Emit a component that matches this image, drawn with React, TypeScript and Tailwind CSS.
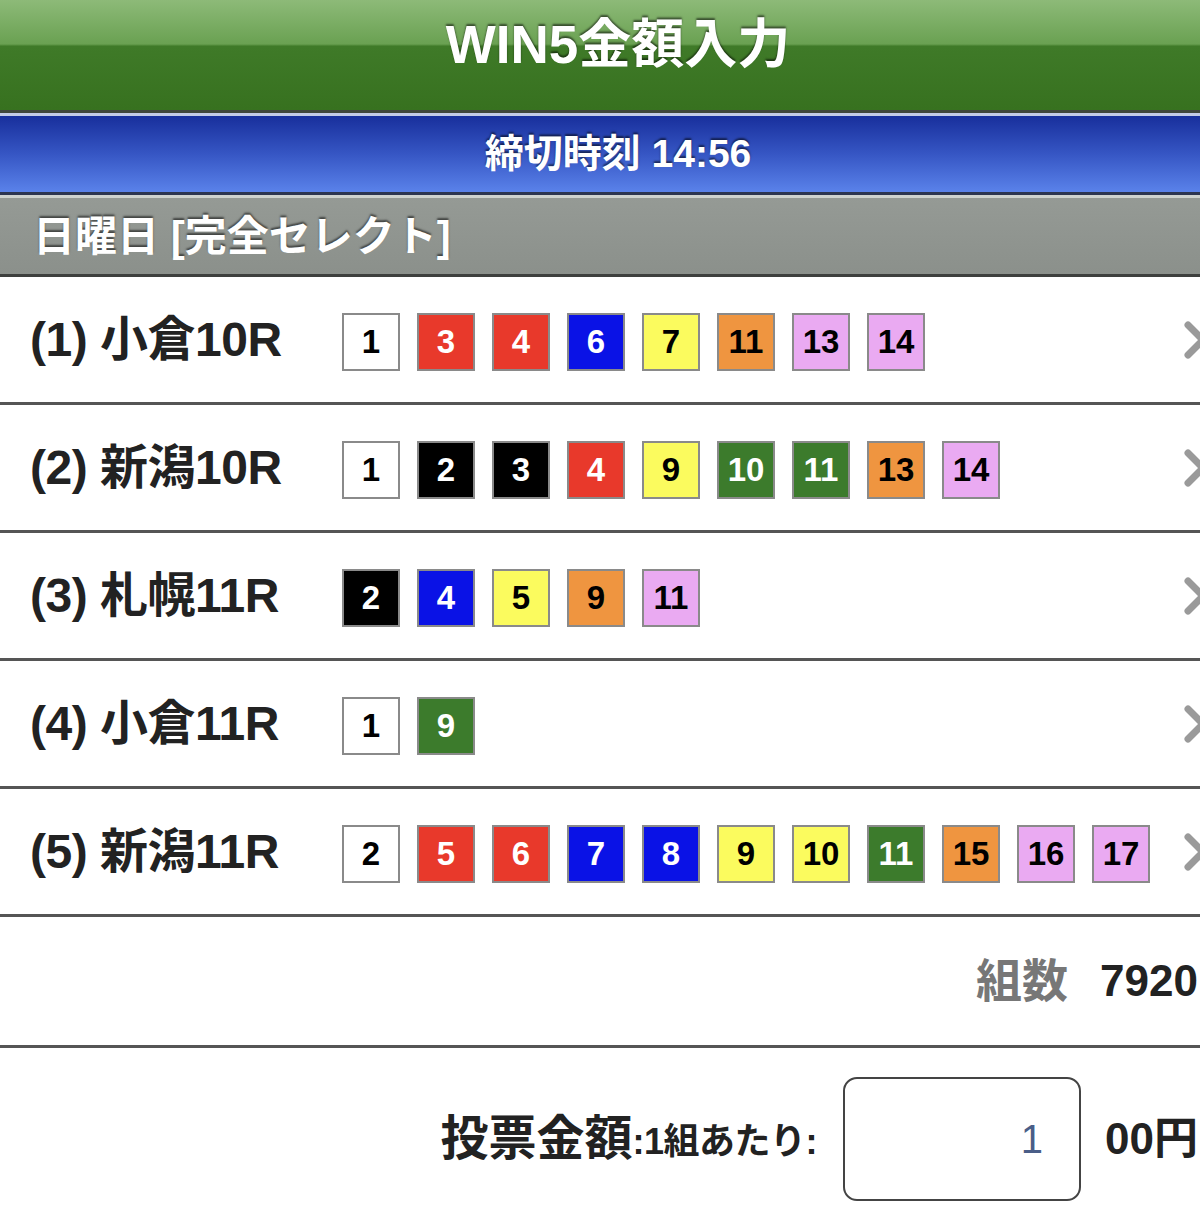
import React from 'react';

type Horse = { n: number; c: keyof typeof frameColors };

// 枠番ごとの色
const frameColors = {
  w: 'bg-white text-black',
  k: 'bg-black text-white',
  r: 'bg-[#e8392b] text-white',
  b: 'bg-[#0a12e6] text-white',
  y: 'bg-[#fbfb5e] text-black',
  g: 'bg-[#3c7b2c] text-white',
  o: 'bg-[#ef9540] text-black',
  p: 'bg-[#eaaaf2] text-black',
};

const races: { label: string; horses: Horse[] }[] = [
  {
    label: '(1) 小倉10R',
    horses: [
      { n: 1, c: 'w' }, { n: 3, c: 'r' }, { n: 4, c: 'r' }, { n: 6, c: 'b' },
      { n: 7, c: 'y' }, { n: 11, c: 'o' }, { n: 13, c: 'p' }, { n: 14, c: 'p' },
    ],
  },
  {
    label: '(2) 新潟10R',
    horses: [
      { n: 1, c: 'w' }, { n: 2, c: 'k' }, { n: 3, c: 'k' }, { n: 4, c: 'r' },
      { n: 9, c: 'y' }, { n: 10, c: 'g' }, { n: 11, c: 'g' }, { n: 13, c: 'o' },
      { n: 14, c: 'p' },
    ],
  },
  {
    label: '(3) 札幌11R',
    horses: [
      { n: 2, c: 'k' }, { n: 4, c: 'b' }, { n: 5, c: 'y' }, { n: 9, c: 'o' },
      { n: 11, c: 'p' },
    ],
  },
  {
    label: '(4) 小倉11R',
    horses: [{ n: 1, c: 'w' }, { n: 9, c: 'g' }],
  },
  {
    label: '(5) 新潟11R',
    horses: [
      { n: 2, c: 'w' }, { n: 5, c: 'r' }, { n: 6, c: 'r' }, { n: 7, c: 'b' },
      { n: 8, c: 'b' }, { n: 9, c: 'y' }, { n: 10, c: 'y' }, { n: 11, c: 'g' },
      { n: 15, c: 'o' }, { n: 16, c: 'p' }, { n: 17, c: 'p' },
    ],
  },
];

const font = "font-['Liberation_Sans','Noto_Sans_CJK_JP',sans-serif]";
const shadow = '[text-shadow:0_-2px_2px_rgba(0,0,0,0.55)]';

function Chevron() {
  return (
    <svg width="26" height="40" viewBox="0 0 26 40" className="shrink-0">
      <polyline
        points="5,5 20,20 5,35"
        fill="none"
        stroke="#9a9a9a"
        strokeWidth="7"
        strokeLinecap="round"
        strokeLinejoin="round"
      />
    </svg>
  );
}

function RaceRow({ label, horses }: { label: string; horses: Horse[] }) {
  return (
    <div className="flex h-[128px] items-center border-b-[3px] border-[#555] bg-white pl-[30px]">
      <div className="w-[312px] shrink-0 text-[48px] font-bold tracking-[-0.5px] text-[#222]">{label}</div>
      <div className="flex flex-1 gap-[17px] pt-[4px]">
        {horses.map((h, i) => (
          <div
            key={i}
            className={`flex h-[58px] w-[58px] items-center justify-center border-[2px] border-[#8a8a8a] text-[33px] font-bold leading-none ${frameColors[h.c]}`}
          >
            {h.n}
          </div>
        ))}
      </div>
      <div className="mr-[27px]">
        <Chevron />
      </div>
    </div>
  );
}

export default function App() {
  return (
    <div className={`h-[1230px] w-[1200px] overflow-hidden bg-white ${font}`}>
      <div className="w-[1236px]">
        {/* タイトルバー */}
        <div className="flex h-[113px] items-center justify-center border-b-[3px] border-[#3f463b] bg-[linear-gradient(to_bottom,#8dba78_0%,#6aa152_40%,#3f7a28_42%,#37711f_100%)] pb-[20px]">
          <h1 className={`text-[53px] font-bold text-white ${shadow}`}>WIN5金額入力</h1>
        </div>

        {/* 締切時刻 */}
        <div className="flex h-[82px] items-center justify-center border-t-[3px] border-b-[3px] border-t-[#c3cbe6] border-b-[#2c3550] bg-[linear-gradient(to_bottom,#182f9c_0%,#3656c4_50%,#5a82ea_100%)]">
          <span className={`text-[39px] font-bold text-white ${shadow}`}>締切時刻 14:56</span>
        </div>

        {/* 開催日 */}
        <div className="flex h-[82px] items-center border-t-[3px] border-b-[3px] border-t-[#cfd3cf] border-b-[#3d3f3d] bg-[linear-gradient(to_bottom,#959a95,#8b908b)] pl-[33px]">
          <span className={`text-[42px] font-bold text-white ${shadow}`}>日曜日 [完全セレクト]</span>
        </div>

        {races.map((r) => (
          <RaceRow key={r.label} label={r.label} horses={r.horses} />
        ))}

        {/* 組数 */}
        <div className="flex h-[131px] items-center justify-end border-b-[3px] border-[#555] pr-[38px]">
          <span className="text-[46px] font-bold text-[#777]">組数</span>
          <span className="ml-[32px] text-[44px] font-bold text-[#222]">7920</span>
        </div>

        {/* 投票金額 */}
        <div className="flex h-[182px] items-center justify-end pr-[38px]">
          <span className="text-[48px] font-bold text-[#222]">投票金額</span>
          <span className="pt-[6px] text-[36px] font-bold tracking-[-0.5px] text-[#222]">:1組あたり:</span>
          <div className="ml-[26px] flex h-[124px] w-[238px] items-center justify-end rounded-[14px] border-[2px] border-[#444] pr-[36px]">
            <span className="text-[40px] text-[#4a5e88]">1</span>
          </div>
          <span className="ml-[24px] text-[44px] font-bold text-[#222]">00円</span>
        </div>
      </div>
    </div>
  );
}
